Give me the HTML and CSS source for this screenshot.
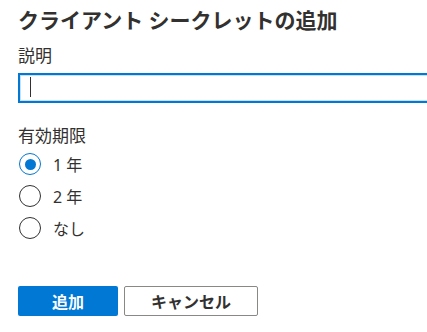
FILE: index.html
```html
<!DOCTYPE html>
<html lang="ja">
<head>
    <meta charset="UTF-8">
    <meta name="viewport" content="width=device-width, initial-scale=1.0">
    <title>クライアント シークレットの追加</title>
    <link rel="stylesheet" href="styles.css">
</head>
<body>
    <div class="panel">
        <h1>クライアント シークレットの追加</h1>
        <label class="field-label" for="desc">説明</label>
        <div class="input-box">
            <input id="desc" class="text-input" type="text">
            <span class="caret"></span>
        </div>

        <div class="field-label group-label">有効期限</div>
        <div class="radio-group">
            <label class="radio-row">
                <span class="radio checked"></span>
                <span class="radio-text">1 年</span>
            </label>
            <label class="radio-row">
                <span class="radio"></span>
                <span class="radio-text">2 年</span>
            </label>
            <label class="radio-row">
                <span class="radio"></span>
                <span class="radio-text">なし</span>
            </label>
        </div>

        <div class="actions">
            <button class="btn btn-primary">追加</button>
            <button class="btn btn-default">キャンセル</button>
        </div>
    </div>
</body>
</html>
```

FILE: styles.css
```css
body {
    margin: 0;
    background: #fff;
    color: #323130;
    font-family: "Noto Sans", "Noto Sans CJK JP", sans-serif;
    overflow: hidden;
}
.panel {
    padding: 6px 0 0 18px;
}
h1 {
    font-size: 21px;
    font-weight: 700;
    line-height: 28px;
    margin: 0 0 10px 0;
}
.field-label {
    display: block;
    font-size: 17px;
    line-height: 24px;
}
/* the field runs on past the right edge, so no right border */
.input-box {
    position: relative;
    height: 30px;
    margin-top: 5px;
    box-sizing: border-box;
    border: 2px solid #0078d4;
    border-right: none;
    box-shadow: inset 1px 0 #c7e0f4, inset 0 1px #c7e0f4, inset 0 -1px #c7e0f4;
}
.text-input {
    border: none;
    outline: none;
    background: transparent;
    width: 100%;
    height: 100%;
    padding: 0;
}
.caret {
    position: absolute;
    left: 10px;
    top: 2px;
    width: 1px;
    height: 20px;
    background: #323130;
}
.group-label { margin-top: 21px; }
.radio-row {
    display: flex;
    align-items: center;
    height: 32px;
    font-size: 16px;
}
.radio {
    width: 22px;
    height: 22px;
    box-sizing: border-box;
    border: 1px solid #323130;
    border-radius: 50%;
    margin-left: 1px;
    margin-right: 12px;
    display: flex;
    align-items: center;
    justify-content: center;
}
.radio.checked { border-color: #0078d4; }
.radio.checked::after {
    content: "";
    width: 11px;
    height: 11px;
    border-radius: 50%;
    background: #0078d4;
}
.actions {
    margin-top: 42px;
    display: flex;
    gap: 6px;
}
.btn {
    height: 30px;
    box-sizing: border-box;
    border-radius: 2px;
    font-family: inherit;
    font-size: 16px;
    font-weight: 700;
    cursor: pointer;
}
.btn-primary {
    width: 100px;
    background: #0078d4;
    color: #fff;
    border: none;
}
.btn-default {
    width: 134px;
    background: #fff;
    color: #323130;
    border: 1px solid #8a8886;
}
```
